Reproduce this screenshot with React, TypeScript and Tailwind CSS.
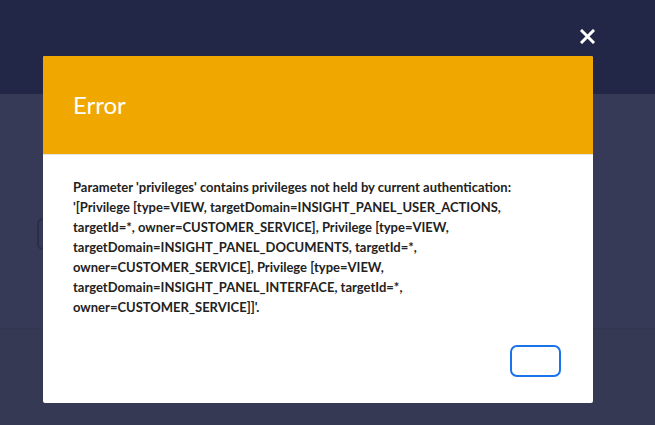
import React from "react";

const message =
  "Parameter 'privileges' contains privileges not held by current authentication: '[Privilege [type=VIEW, targetDomain=INSIGHT_PANEL_USER_ACTIONS, targetId=*, owner=CUSTOMER_SERVICE], Privilege [type=VIEW, targetDomain=INSIGHT_PANEL_DOCUMENTS, targetId=*, owner=CUSTOMER_SERVICE], Privilege [type=VIEW, targetDomain=INSIGHT_PANEL_INTERFACE, targetId=*, owner=CUSTOMER_SERVICE]]'.";

export default function App() {
  return (
    <div
      className="relative w-[655px] h-[425px] overflow-hidden bg-[#363954]"
      style={{ fontFamily: "Lato, 'Noto Sans', sans-serif" }}
    >
      {/* dimmed page behind the dialog */}
      <div className="h-[94px] bg-[#222647]" />
      <div className="h-[235px] bg-[#373a56] border-b border-[#33364f] pt-[124px] pl-[37px]">
        <div className="w-[120px] h-[32px] rounded-[6px] border-2 border-[#2b2e49]" />
      </div>

      {/* overlay */}
      <div className="absolute inset-0">
        <button className="absolute top-[29px] left-[580px] w-[15px] h-[15px] text-white">
          <svg viewBox="0 0 15 15" className="w-[15px] h-[15px]">
            <path d="M2 2 L13 13 M13 2 L2 13" stroke="currentColor" strokeWidth="3" strokeLinecap="square" />
          </svg>
        </button>

        <div className="mt-[56px] ml-[43px] w-[550px] bg-white rounded-[2px] overflow-hidden">
          <div className="h-[99px] bg-[#f0a800] flex items-center px-[30px] border-b border-[#e4e4e4]">
            <h1 className="text-[24px] text-white font-normal leading-none">Error</h1>
          </div>
          <div className="pl-[30px] pr-[32px] pt-[22px] pb-[26px]">
            <p className="w-[470px] text-[13px] leading-[20px] font-bold text-[#222]">{message}</p>
            <div className="flex justify-end mt-[28px]">
              <button className="w-[51px] h-[32px] rounded-[7px] border-2 border-[#1a73e8] bg-white" />
            </div>
          </div>
        </div>
      </div>
    </div>
  );
}
